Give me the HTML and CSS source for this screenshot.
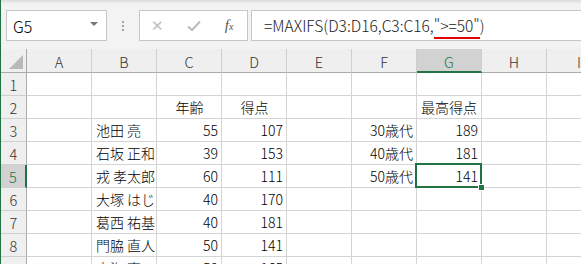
FILE: index.html
```html
<!DOCTYPE html>
<html lang="ja">
<head>
    <meta charset="UTF-8">
    <title>MAXIFS</title>
    <link rel="stylesheet" href="styles.css">
</head>
<body>
    <div class="app">
        <div class="formula-bar">
            <div class="name-box">
                <span class="name">G5</span>
                <span class="drop"></span>
            </div>
            <div class="grip"><span></span><span></span><span></span></div>
            <div class="fx-box">
                <span class="btn cancel">✕</span>
                <span class="btn ok">
                    <svg width="14" height="12" viewBox="0 0 14 12"><path d="M1 6.5 L5 10 L13 1.5" fill="none" stroke="#bdbdbd" stroke-width="2"/></svg>
                </span>
                <span class="btn fx">f<small>x</small></span>
            </div>
            <div class="formula">=MAXIFS(D3:D16,C3:C16,<span class="mark">"&gt;=50"</span>)</div>
        </div>

        <div class="sheet">
            <!-- 見出し -->
            <div class="hd corner"><span class="tri"></span></div>
            <div class="hd col">A</div>
            <div class="hd col">B</div>
            <div class="hd col">C</div>
            <div class="hd col">D</div>
            <div class="hd col">E</div>
            <div class="hd col">F</div>
            <div class="hd col active-col">G</div>
            <div class="hd col">H</div>
            <div class="hd col">I</div>

            <!-- 1 -->
            <div class="hd row">1</div>
            <div class="c"></div><div class="c"></div><div class="c"></div><div class="c"></div><div class="c"></div><div class="c"></div><div class="c"></div><div class="c"></div><div class="c"></div>

            <!-- 2 -->
            <div class="hd row">2</div>
            <div class="c"></div><div class="c"></div>
            <div class="c ctr">年齢</div>
            <div class="c ctr">得点</div>
            <div class="c"></div><div class="c"></div>
            <div class="c">最高得点</div>
            <div class="c"></div><div class="c"></div>

            <!-- 3 -->
            <div class="hd row">3</div>
            <div class="c"></div>
            <div class="c">池田 亮</div>
            <div class="c num">55</div>
            <div class="c num">107</div>
            <div class="c"></div>
            <div class="c num">30歳代</div>
            <div class="c num">189</div>
            <div class="c"></div><div class="c"></div>

            <!-- 4 -->
            <div class="hd row">4</div>
            <div class="c"></div>
            <div class="c">石坂 正和</div>
            <div class="c num">39</div>
            <div class="c num">153</div>
            <div class="c"></div>
            <div class="c num">40歳代</div>
            <div class="c num">181</div>
            <div class="c"></div><div class="c"></div>

            <!-- 5 -->
            <div class="hd row active-row">5</div>
            <div class="c"></div>
            <div class="c">戎 孝太郎</div>
            <div class="c num">60</div>
            <div class="c num">111</div>
            <div class="c"></div>
            <div class="c num">50歳代</div>
            <div class="c num selected">141<span class="handle"></span></div>
            <div class="c"></div><div class="c"></div>

            <!-- 6 -->
            <div class="hd row">6</div>
            <div class="c"></div>
            <div class="c">大塚 はじめ</div>
            <div class="c num">40</div>
            <div class="c num">170</div>
            <div class="c"></div><div class="c"></div><div class="c"></div><div class="c"></div><div class="c"></div>

            <!-- 7 -->
            <div class="hd row">7</div>
            <div class="c"></div>
            <div class="c">葛西 祐基</div>
            <div class="c num">40</div>
            <div class="c num">181</div>
            <div class="c"></div><div class="c"></div><div class="c"></div><div class="c"></div><div class="c"></div>

            <!-- 8 -->
            <div class="hd row">8</div>
            <div class="c"></div>
            <div class="c">門脇 直人</div>
            <div class="c num">50</div>
            <div class="c num">141</div>
            <div class="c"></div><div class="c"></div><div class="c"></div><div class="c"></div><div class="c"></div>

            <!-- 9 -->
            <div class="hd row">9</div>
            <div class="c"></div>
            <div class="c">東海 亮</div>
            <div class="c num">50</div>
            <div class="c num">165</div>
            <div class="c"></div><div class="c"></div><div class="c"></div><div class="c"></div><div class="c"></div>
        </div>
    </div>
</body>
</html>
```

FILE: styles.css
```css
body, html {
    margin: 0;
    padding: 0;
    background-color: #fff;
    overflow: hidden;
}
.app {
    width: 581px;
    height: 264px;
    border-left: 1px solid #217346;
    box-sizing: border-box;
    overflow: hidden;
    font-family: "Noto Sans CJK JP", "Noto Sans", sans-serif;
    font-weight: 300;
    color: #000;
}
.formula-bar {
    height: 49px;
    background: linear-gradient(#dcdcdc, #f3f3f3 4px);
    display: flex;
    align-items: flex-start;
    padding-top: 10px;
    box-sizing: border-box;
}
.name-box {
    width: 101px;
    height: 31px;
    margin-left: 5px;
    background-color: #fff;
    border: 1px solid #c6c6c6;
    box-sizing: border-box;
    display: flex;
    align-items: center;
    justify-content: space-between;
    padding: 0 8px 0 6px;
}
.name {
    font-size: 16px;
}
.drop {
    width: 0;
    height: 0;
    border-left: 4px solid transparent;
    border-right: 4px solid transparent;
    border-top: 4px solid #777;
    margin-top: -4px;
}
.grip {
    width: 32px;
    height: 31px;
    display: flex;
    flex-direction: column;
    align-items: center;
    justify-content: center;
    gap: 2px;
}
.grip span {
    width: 2px;
    height: 2px;
    background-color: #a5a5a5;
}
.fx-box {
    width: 109px;
    height: 31px;
    background-color: #fff;
    border: 1px solid #c6c6c6;
    box-sizing: border-box;
    display: flex;
    align-items: center;
}
.btn {
    width: 36px;
    text-align: center;
    display: flex;
    justify-content: center;
}
.cancel {
    color: #bdbdbd;
    font-size: 15px;
    font-family: "DejaVu Sans", sans-serif;
}
.fx {
    font-family: "Liberation Serif", serif;
    font-style: italic;
    color: #555;
    font-size: 15px;
}
.fx small {
    font-size: 10px;
    margin-top: 4px;
}
.formula {
    flex: 1;
    height: 31px;
    margin-left: 3px;
    background-color: #fff;
    border: 1px solid #c6c6c6;
    border-right: none;
    box-sizing: border-box;
    padding-left: 12px;
    font-size: 15.5px;
    line-height: 28px;
    white-space: nowrap;
    color: #222;
}
.mark {
    border-bottom: 2px solid #e00000;
    padding-bottom: 1px;
}
.sheet {
    display: grid;
    grid-template-columns: 26px repeat(9, 65px);
    grid-template-rows: 24px repeat(9, 23px);
}
.hd {
    background-color: #efefef;
    border-right: 1px solid #cfcfcf;
    border-bottom: 1px solid #ababab;
    box-sizing: border-box;
    font-size: 14.5px;
    color: #333;
    display: flex;
    align-items: center;
    justify-content: center;
}
.col {
    border-right: 1px solid #cfcfcf;
    padding-top: 2px;
}
.row {
    border-right: 1px solid #ababab;
    border-bottom: 1px solid #cfcfcf;
}
.corner {
    position: relative;
    border-right: 1px solid #ababab;
}
.tri {
    position: absolute;
    right: 3px;
    bottom: 3px;
    width: 0;
    height: 0;
    border-left: 14px solid transparent;
    border-bottom: 14px solid #b9b9b9;
}
.active-col {
    background-color: #d2d2d2;
    border-bottom: 2px solid #217346;
    color: #217346;
}
.active-row {
    background-color: #d2d2d2;
    border-right: 2px solid #217346;
    color: #217346;
}
.c {
    border-right: 1px solid #d4d4d4;
    border-bottom: 1px solid #d4d4d4;
    box-sizing: border-box;
    font-size: 14px;
    line-height: 22px;
    padding: 0 3px 0 4px;
    white-space: nowrap;
    overflow: hidden;
}
.ctr {
    text-align: center;
}
.num {
    text-align: right;
}
.selected {
    position: relative;
    overflow: visible;
}
.selected::after {
    content: "";
    position: absolute;
    top: -2px;
    left: -2px;
    right: -1px;
    bottom: -1px;
    border: 2px solid #217346;
}
.handle {
    position: absolute;
    right: -4px;
    bottom: -4px;
    width: 5px;
    height: 5px;
    background-color: #217346;
    border: 1px solid #fff;
    z-index: 2;
}
```
